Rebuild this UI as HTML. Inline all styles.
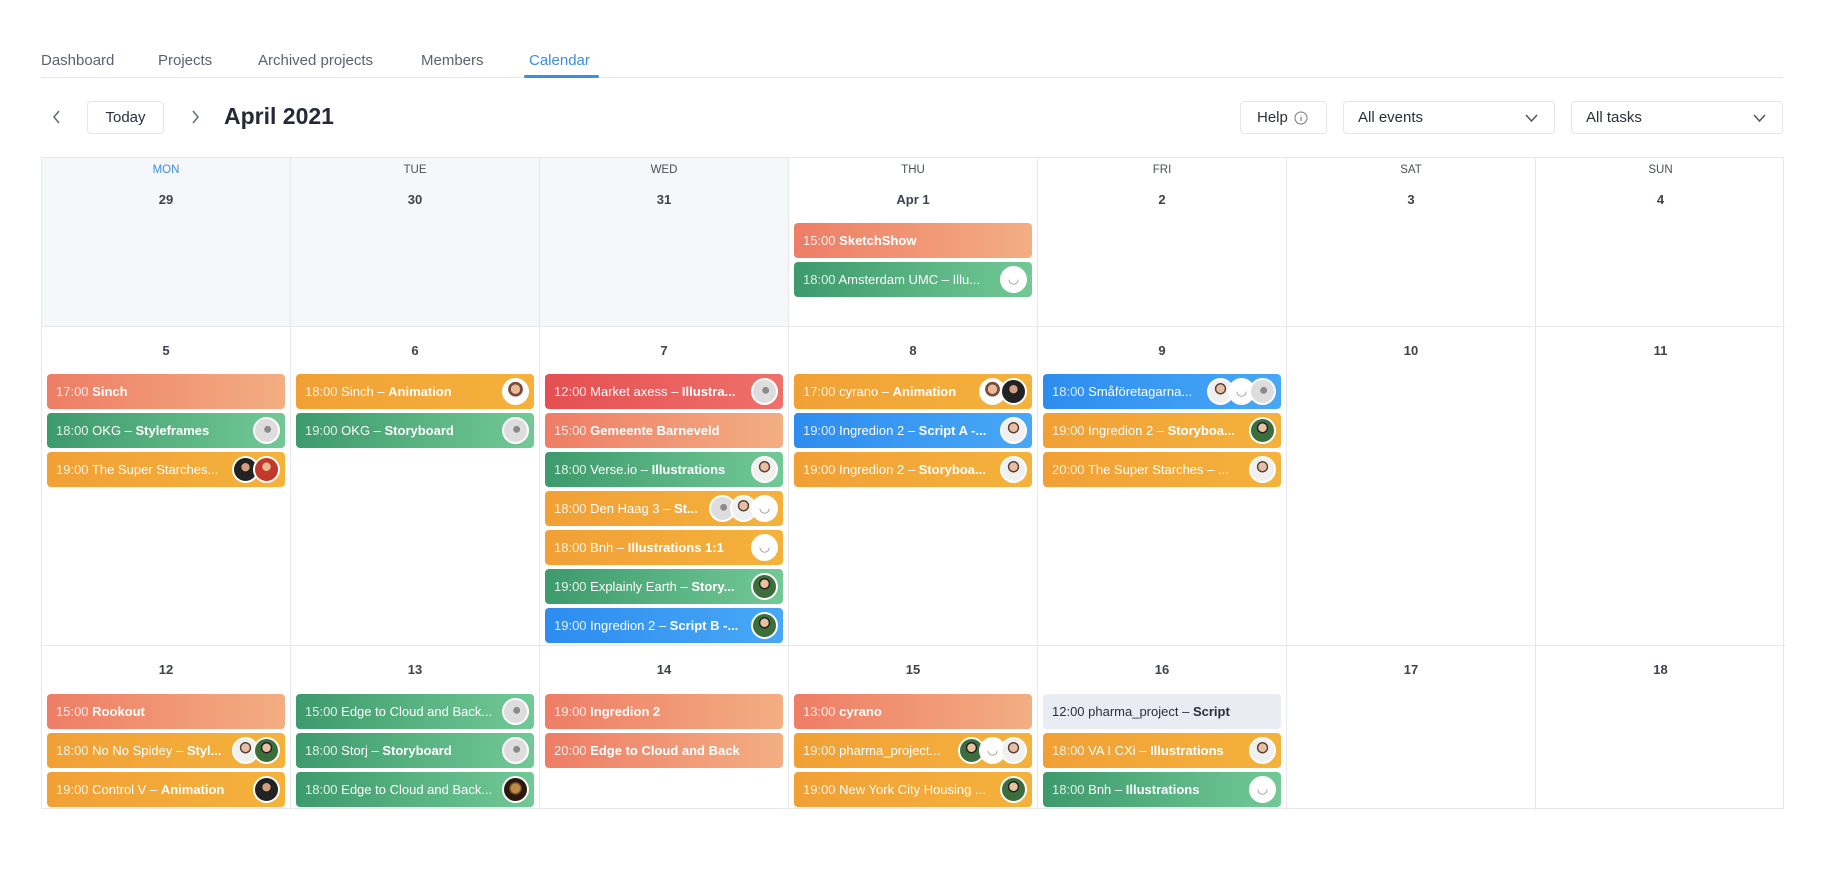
<!DOCTYPE html>
<html><head><meta charset="utf-8"><style>
*{box-sizing:border-box;margin:0;padding:0}
body{width:1824px;height:887px;background:#fff;font-family:"Liberation Sans",sans-serif;color:#2b2f3a;position:relative;overflow:hidden}
.tab{position:absolute;top:52px;font-size:15px;color:#5c6270}
.tabline{position:absolute;left:41px;top:77px;width:1742px;height:1px;background:#e6e8ec}
.ul{position:absolute;left:524px;top:75px;width:75px;height:3px;background:#3b8fe0;border-radius:2px}
.btn{position:absolute;border:1px solid #e3e6eb;border-radius:4px;background:#fff;font-size:15px;color:#2b2f3a;display:flex;align-items:center}
.grid{position:absolute;left:41px;top:157px;width:1743px;height:652px;border:1px solid #e6e8ec}
.cell{position:absolute;border-right:1px solid #e6e8ec;border-bottom:1px solid #e6e8ec}
.grey{background:#f5f7fa}
.dn{position:absolute;top:6px;width:100%;text-align:center;font-size:11.5px;color:#4a4f5a}
.dt{position:absolute;width:100%;text-align:center;font-size:13px;font-weight:bold;color:#3d424d}
.evs{position:absolute;left:5px;right:5px;display:flex;flex-direction:column;gap:4px}
.ev{height:35px;border-radius:4px;color:#fff;font-size:13px;display:flex;align-items:center;padding:0 5px 0 9px;white-space:nowrap;overflow:hidden;position:relative}
.ev .t{flex:1;overflow:hidden;text-overflow:ellipsis}
.ev .t span{opacity:.85}
.ev b{font-weight:bold}
.o{background:linear-gradient(90deg,#ee7d66,#f3ae82)}
.g{background:linear-gradient(90deg,#3d9a6c,#72c996)}
.y{background:linear-gradient(90deg,#f1a036,#f4b23c)}
.r{background:linear-gradient(90deg,#e54f52,#ef716b)}
.bl{background:linear-gradient(90deg,#2d8cef,#48a8f6)}
.gr{background:#e9edf3;color:#2b2f3a}
.av{width:27px;height:27px;border-radius:50%;border:2px solid #fff;flex:none;margin-left:-6px;position:relative;overflow:hidden}
.av:first-of-type{margin-left:4px}
.aJ{background:radial-gradient(circle at 55% 45%,#8a8a8a 0 18%,#ddd 20%)}
.aW{background:radial-gradient(circle at 50% 40%,#e9b99a 0 25%,#7a4a3a 27% 40%,#fff 42%)}
.aM{background:radial-gradient(circle at 50% 38%,#e6c0a5 0 22%,#5a4030 24% 30%,#f0f0f0 32%)}
.aS{background:#fff;color:#888;font-size:13px;text-align:center;line-height:22px}
.aB{background:radial-gradient(circle at 50% 40%,#d3a07d 0 22%,#222 24%),#1e3a5f}
.aG{background:radial-gradient(circle at 50% 38%,#e8c1a0 0 22%,#222 24% 30%,#3c6e3c 32%)}
.aD{background:radial-gradient(circle at 50% 45%,#c38a44 0 25%,#2a1a0e 40%)}
</style></head><body>
<div class="tab" style="left:41px">Dashboard</div>
<div class="tab" style="left:158px">Projects</div>
<div class="tab" style="left:258px">Archived projects</div>
<div class="tab" style="left:421px">Members</div>
<div class="tab" style="left:529px;color:#3b8fe0">Calendar</div>
<div class="tabline"></div><div class="ul"></div>

<svg style="position:absolute;left:51px;top:110px" width="12" height="14" viewBox="0 0 12 14"><path d="M8 1L3 7l5 6" fill="none" stroke="#6b7080" stroke-width="1.6"/></svg>
<div class="btn" style="left:87px;top:101px;width:77px;height:33px;justify-content:center">Today</div>
<svg style="position:absolute;left:189px;top:110px" width="12" height="14" viewBox="0 0 12 14"><path d="M4 1l5 6-5 6" fill="none" stroke="#6b7080" stroke-width="1.6"/></svg>
<div style="position:absolute;left:224px;top:103px;font-size:23px;font-weight:bold;color:#262a36">April 2021</div>

<div class="btn" style="left:1240px;top:101px;width:87px;height:33px;padding-left:16px">Help <svg style="margin-left:6px" width="14" height="14" viewBox="0 0 14 14"><circle cx="7" cy="7" r="6" fill="none" stroke="#777" stroke-width="1"/><path d="M7 6v4M7 4v.5" stroke="#777" stroke-width="1.2"/></svg></div>
<div class="btn" style="left:1343px;top:101px;width:212px;height:33px;padding-left:14px">All events<svg style="position:absolute;right:16px;top:12px" width="13" height="9" viewBox="0 0 13 9"><path d="M1 1l5.5 6L12 1" fill="none" stroke="#555" stroke-width="1.5"/></svg></div>
<div class="btn" style="left:1571px;top:101px;width:212px;height:33px;padding-left:14px">All tasks<svg style="position:absolute;right:16px;top:12px" width="13" height="9" viewBox="0 0 13 9"><path d="M1 1l5.5 6L12 1" fill="none" stroke="#555" stroke-width="1.5"/></svg></div>

<div class="grid">
<div class="cell grey" style="left:0;top:0;width:249px;height:169px"><div class="dn" style="color:#3b8fe0">MON</div><div class="dt" style="top:34px">29</div></div>
<div class="cell grey" style="left:249px;top:0;width:249px;height:169px"><div class="dn">TUE</div><div class="dt" style="top:34px">30</div></div>
<div class="cell grey" style="left:498px;top:0;width:249px;height:169px"><div class="dn">WED</div><div class="dt" style="top:34px">31</div></div>
<div class="cell" style="left:747px;top:0;width:249px;height:169px"><div class="dn">THU</div><div class="dt" style="top:34px">Apr 1</div>
 <div class="evs" style="top:65px">
  <div class="ev o"><div class="t"><span>15:00</span> <b>SketchShow</b></div></div>
  <div class="ev g"><div class="t"><span>18:00</span> Amsterdam UMC – Illu...</div><div class="av aS">◡</div></div>
 </div></div>
<div class="cell" style="left:996px;top:0;width:249px;height:169px"><div class="dn">FRI</div><div class="dt" style="top:34px">2</div></div>
<div class="cell" style="left:1245px;top:0;width:249px;height:169px"><div class="dn">SAT</div><div class="dt" style="top:34px">3</div></div>
<div class="cell" style="left:1494px;top:0;width:249px;height:169px;border-right:none"><div class="dn">SUN</div><div class="dt" style="top:34px">4</div></div>
<div class="cell" style="left:0;top:169px;width:249px;height:319px"><div class="dt" style="top:16px">5</div>
 <div class="evs" style="top:47px">
  <div class="ev o"><div class="t"><span>17:00</span> <b>Sinch</b></div></div>
  <div class="ev g"><div class="t"><span>18:00</span> OKG – <b>Styleframes</b></div><div class="av aJ"></div></div>
  <div class="ev y"><div class="t"><span>19:00</span> The Super Starches...</div><div class="av aB"></div><div class="av aB" style="background:radial-gradient(circle at 50% 38%,#e8b890 0 22%,#c0392b 24%)"></div></div>
 </div></div>
<div class="cell" style="left:249px;top:169px;width:249px;height:319px"><div class="dt" style="top:16px">6</div>
 <div class="evs" style="top:47px">
  <div class="ev y"><div class="t"><span>18:00</span> Sinch – <b>Animation</b></div><div class="av aW"></div></div>
  <div class="ev g"><div class="t"><span>19:00</span> OKG – <b>Storyboard</b></div><div class="av aJ"></div></div>
 </div></div>
<div class="cell" style="left:498px;top:169px;width:249px;height:319px"><div class="dt" style="top:16px">7</div>
 <div class="evs" style="top:47px">
  <div class="ev r"><div class="t"><span>12:00</span> Market axess – <b>Illustra...</b></div><div class="av aJ"></div></div>
  <div class="ev o"><div class="t"><span>15:00</span> <b>Gemeente Barneveld</b></div></div>
  <div class="ev g"><div class="t"><span>18:00</span> Verse.io – <b>Illustrations</b></div><div class="av aM"></div></div>
  <div class="ev y"><div class="t"><span>18:00</span> Den Haag 3 – <b>St...</b></div><div class="av aJ"></div><div class="av aM"></div><div class="av aS">◡</div></div>
  <div class="ev y"><div class="t"><span>18:00</span> Bnh – <b>Illustrations 1:1</b></div><div class="av aS">◡</div></div>
  <div class="ev g"><div class="t"><span>19:00</span> Explainly Earth – <b>Story...</b></div><div class="av aG"></div></div>
  <div class="ev bl"><div class="t"><span>19:00</span> Ingredion 2 – <b>Script B -...</b></div><div class="av aG"></div></div>
 </div></div>
<div class="cell" style="left:747px;top:169px;width:249px;height:319px"><div class="dt" style="top:16px">8</div>
 <div class="evs" style="top:47px">
  <div class="ev y"><div class="t"><span>17:00</span> cyrano – <b>Animation</b></div><div class="av aW"></div><div class="av aB"></div></div>
  <div class="ev bl"><div class="t"><span>19:00</span> Ingredion 2 – <b>Script A -...</b></div><div class="av aM"></div></div>
  <div class="ev y"><div class="t"><span>19:00</span> Ingredion 2 – <b>Storyboa...</b></div><div class="av aM"></div></div>
 </div></div>
<div class="cell" style="left:996px;top:169px;width:249px;height:319px"><div class="dt" style="top:16px">9</div>
 <div class="evs" style="top:47px">
  <div class="ev bl"><div class="t"><span>18:00</span> Småföretagarna...</div><div class="av aM"></div><div class="av aS">◡</div><div class="av aJ"></div></div>
  <div class="ev y"><div class="t"><span>19:00</span> Ingredion 2 – <b>Storyboa...</b></div><div class="av aG"></div></div>
  <div class="ev y"><div class="t"><span>20:00</span> The Super Starches – ...</div><div class="av aM"></div></div>
 </div></div>
<div class="cell" style="left:1245px;top:169px;width:249px;height:319px"><div class="dt" style="top:16px">10</div></div>
<div class="cell" style="left:1494px;top:169px;width:249px;height:319px;border-right:none"><div class="dt" style="top:16px">11</div></div>
<div class="cell" style="left:0;top:488px;width:249px;height:164px;border-bottom:none"><div class="dt" style="top:16px">12</div>
 <div class="evs" style="top:48px">
  <div class="ev o"><div class="t"><span>15:00</span> <b>Rookout</b></div></div>
  <div class="ev y"><div class="t"><span>18:00</span> No No Spidey – <b>Styl...</b></div><div class="av aM"></div><div class="av aG"></div></div>
  <div class="ev y"><div class="t"><span>19:00</span> Control V – <b>Animation</b></div><div class="av aB"></div></div>
 </div></div>
<div class="cell" style="left:249px;top:488px;width:249px;height:164px;border-bottom:none"><div class="dt" style="top:16px">13</div>
 <div class="evs" style="top:48px">
  <div class="ev g"><div class="t"><span>15:00</span> Edge to Cloud and Back...</div><div class="av aJ"></div></div>
  <div class="ev g"><div class="t"><span>18:00</span> Storj – <b>Storyboard</b></div><div class="av aJ"></div></div>
  <div class="ev g"><div class="t"><span>18:00</span> Edge to Cloud and Back...</div><div class="av aD"></div></div>
 </div></div>
<div class="cell" style="left:498px;top:488px;width:249px;height:164px;border-bottom:none"><div class="dt" style="top:16px">14</div>
 <div class="evs" style="top:48px">
  <div class="ev o"><div class="t"><span>19:00</span> <b>Ingredion 2</b></div></div>
  <div class="ev o"><div class="t"><span>20:00</span> <b>Edge to Cloud and Back</b></div></div>
 </div></div>
<div class="cell" style="left:747px;top:488px;width:249px;height:164px;border-bottom:none"><div class="dt" style="top:16px">15</div>
 <div class="evs" style="top:48px">
  <div class="ev o"><div class="t"><span>13:00</span> <b>cyrano</b></div></div>
  <div class="ev y"><div class="t"><span>19:00</span> pharma_project...</div><div class="av aG"></div><div class="av aS">◡</div><div class="av aM"></div></div>
  <div class="ev y"><div class="t"><span>19:00</span> New York City Housing ...</div><div class="av aG"></div></div>
 </div></div>
<div class="cell" style="left:996px;top:488px;width:249px;height:164px;border-bottom:none"><div class="dt" style="top:16px">16</div>
 <div class="evs" style="top:48px">
  <div class="ev gr"><div class="t">12:00 pharma_project – <b>Script</b></div></div>
  <div class="ev y"><div class="t"><span>18:00</span> VA I CXi – <b>Illustrations</b></div><div class="av aM"></div></div>
  <div class="ev g"><div class="t"><span>18:00</span> Bnh – <b>Illustrations</b></div><div class="av aS">◡</div></div>
 </div></div>
<div class="cell" style="left:1245px;top:488px;width:249px;height:164px;border-bottom:none"><div class="dt" style="top:16px">17</div></div>
<div class="cell" style="left:1494px;top:488px;width:249px;height:164px;border-right:none;border-bottom:none"><div class="dt" style="top:16px">18</div></div>
</div>
</body></html>
